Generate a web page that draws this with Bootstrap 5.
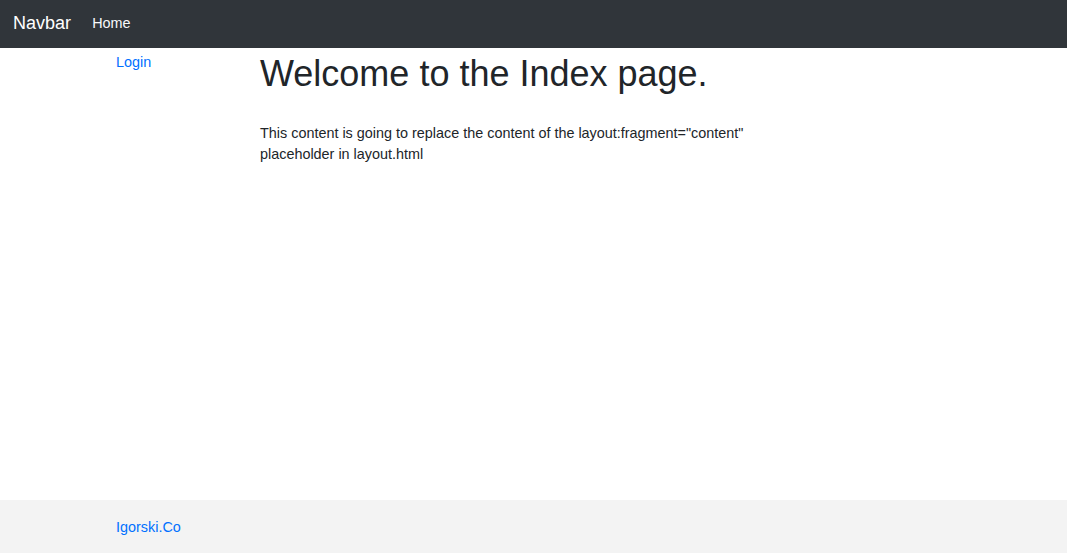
<!DOCTYPE html>
<html lang="en">
<head>
<meta charset="utf-8">
<meta name="viewport" content="width=device-width, initial-scale=1">
<title>Index</title>
<link href="https://cdn.jsdelivr.net/npm/bootstrap@5.3.0/dist/css/bootstrap.min.css" rel="stylesheet">
<style>
html { font-size: 90%; }
body { font-family: "Liberation Sans", Arial, sans-serif; line-height: 21px; color: #212529; }
a { color: #0070ff; text-decoration: none; }
.site-nav { background: #30353a; padding: 7px 13px 8px; }
.site-nav .navbar-brand { font-size: 18px; margin-right: 14px; padding: 6px 0; color: #fff; }
.site-nav .nav-link { color: #fff; padding: 6px 8px; }
.page-wrap { max-width: 863px; padding-left: 14px; padding-right: 14px; }
.side-col { width: 144px; padding-top: 4px; }
.content-col { max-width: 504px; padding-top: 4px; }
.content-col h1 { font-size: 36px; line-height: 43px; margin-bottom: 28px; font-weight: 400; }
.site-footer { background: #f3f3f3; padding: 17px 0 15px; }
</style>
</head>
<body class="d-flex flex-column min-vh-100">
<nav class="navbar navbar-expand site-nav" data-bs-theme="dark">
  <a class="navbar-brand" href="#">Navbar</a>
  <ul class="navbar-nav">
    <li class="nav-item"><a class="nav-link active" href="#">Home</a></li>
  </ul>
</nav>
<main class="container page-wrap d-flex flex-grow-1">
  <aside class="side-col flex-shrink-0"><a href="#">Login</a></aside>
  <section class="content-col">
    <h1>Welcome to the Index page.</h1>
    <p>This content is going to replace the content of the layout:fragment="content" placeholder in layout.html</p>
  </section>
</main>
<footer class="site-footer">
  <div class="container page-wrap"><a href="#">Igorski.Co</a></div>
</footer>
<script src="https://cdn.jsdelivr.net/npm/bootstrap@5.3.0/dist/js/bootstrap.bundle.min.js"></script>
</body>
</html>
